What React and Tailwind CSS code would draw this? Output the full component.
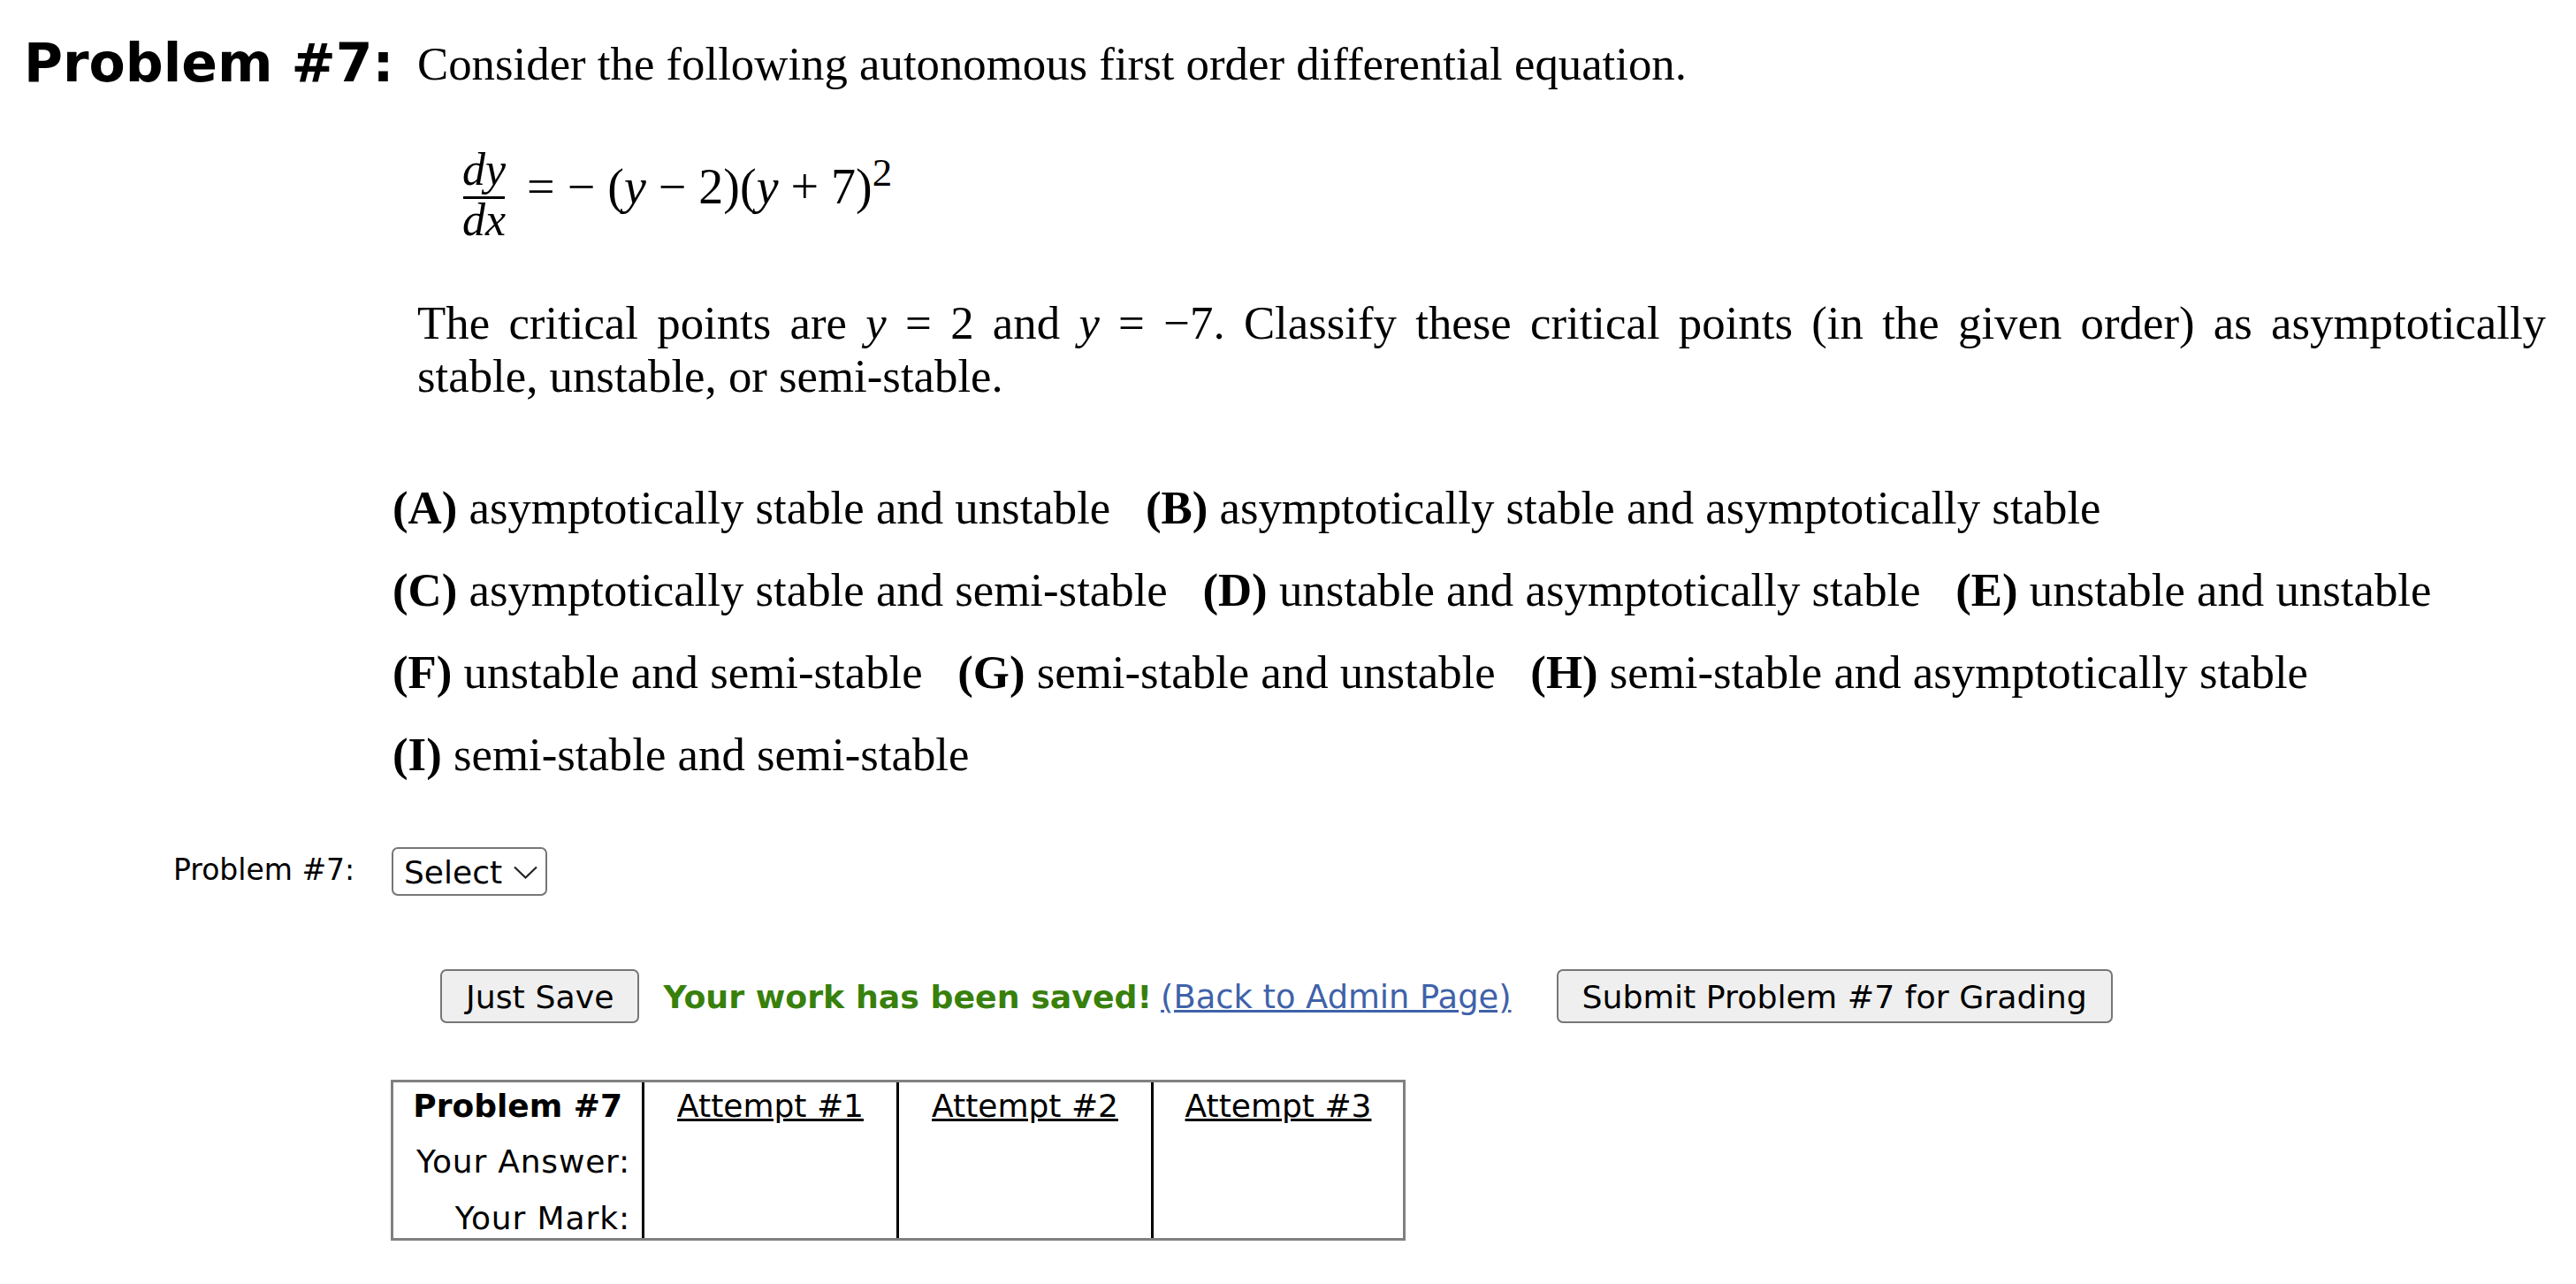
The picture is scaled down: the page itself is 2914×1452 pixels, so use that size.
export default function App() {
  return (
    <div className="min-h-screen bg-white text-black">
      {/* Heading + statement */}
      <div className="flex items-start pt-[36px]">
        <div className="w-[472px] shrink-0 pl-[27px] font-['DejaVu_Sans',sans-serif] font-bold text-[60px] leading-[70px]">
          Problem #7:
        </div>
        <div className="w-[2408px] shrink-0 mt-[6px] font-['Liberation_Serif',serif] text-[52.8px]">
          <div className="leading-[60px]">
            Consider the following autonomous first order differential equation.
          </div>
          <div className="mt-[66px] ml-[51px] flex items-start">
            <div className="flex flex-col items-center text-[52px] italic">
              <span className="leading-[48px]">dy</span>
              <div className="mt-[6px] h-[3px] w-[47px] bg-black" />
              <span className="leading-[48px]">dx</span>
            </div>
            <div className="ml-[24px] mt-[15px] text-[56px] leading-[56px] whitespace-nowrap">
              {"=\u00a0\u2212\u00a0("}
              <span className="italic">y</span>
              {"\u00a0\u2212\u00a02)("}
              <span className="italic">y</span>
              {"\u00a0+\u00a07)"}
              <span className="text-[45px] leading-[0] align-[20px]">2</span>
            </div>
          </div>
          <div className="mt-[62px] leading-[60px]">
            <div className="text-justify [text-align-last:justify]">
              The critical points are <span className="italic">y</span> = 2 and{" "}
              <span className="italic">y</span> = {"\u2212"}7. Classify these critical points (in the given
              order) as asymptotically
            </div>
            <div>stable, unstable, or semi-stable.</div>
          </div>
        </div>
      </div>

      {/* Options */}
      <div className="ml-[444px] mt-[73px] flex flex-col font-['Liberation_Serif',serif] text-[52.8px] leading-[93px] whitespace-nowrap">
        <div>
          <span className="font-bold">(A)</span> asymptotically stable and unstable{"\u00a0\u00a0\u00a0"}
          <span className="font-bold">(B)</span> asymptotically stable and asymptotically stable
        </div>
        <div>
          <span className="font-bold">(C)</span> asymptotically stable and semi-stable{"\u00a0\u00a0\u00a0"}
          <span className="font-bold">(D)</span> unstable and asymptotically stable{"\u00a0\u00a0\u00a0"}
          <span className="font-bold">(E)</span> unstable and unstable
        </div>
        <div>
          <span className="font-bold">(F)</span> unstable and semi-stable{"\u00a0\u00a0\u00a0"}
          <span className="font-bold">(G)</span> semi-stable and unstable{"\u00a0\u00a0\u00a0"}
          <span className="font-bold">(H)</span> semi-stable and asymptotically stable
        </div>
        <div>
          <span className="font-bold">(I)</span> semi-stable and semi-stable
        </div>
      </div>

      {/* Select row */}
      <div className="mt-[58px] flex items-start font-['DejaVu_Sans',sans-serif]">
        <div className="ml-[196px] w-[247px] shrink-0 mt-[6.6px] text-[33px] leading-[38px]">Problem #7:</div>
        <div className="flex h-[55px] w-[176px] shrink-0 items-start rounded-[7px] border-[2.5px] border-[#767676] bg-white pl-[12px] pt-[6px] text-[36px] leading-[42px]">
          <span>Select</span>
          <svg className="ml-[13px] mt-[12.5px]" width="27" height="15" viewBox="0 0 27 15" fill="none">
            <polyline points="1,1.5 13.5,13.5 26,1.5" stroke="#222" strokeWidth="2.2" />
          </svg>
        </div>
      </div>

      {/* Buttons row */}
      <div className="mt-[83px] flex items-center pl-[498px] font-['DejaVu_Sans',sans-serif] text-[36.3px] leading-[42px] whitespace-nowrap">
        <button type="button" className="h-[61px] rounded-[7px] border-[2.5px] border-[#767676] bg-[#efefef] px-[27px] pt-[3px] text-black">
          Just Save
        </button>
        <span className="ml-[27px] pt-[3px] font-bold text-[#38800c]">Your work has been saved!</span>
        <a className="ml-[10px] pt-[3px] text-[36.8px] text-[#3f62a9] underline">(Back to Admin Page)</a>
        <button type="button" className="ml-[51px] h-[61px] rounded-[7px] border-[2.5px] border-[#767676] bg-[#efefef] px-[27px] pt-[3px] text-black">
          Submit Problem #7 for Grading
        </button>
      </div>

      {/* Attempts table */}
      <div className="ml-[442px] mt-[64px] flex w-fit border-[3px] border-[#808080] font-['DejaVu_Sans',sans-serif] text-[36px] leading-[42px] whitespace-nowrap">
        <div className="flex w-[281px] flex-col items-end gap-[21.5px] pb-[1.4px] pr-[13px] pt-[5.6px]">
          <span className="mr-[9px] font-bold">Problem #7</span>
          <span className="tracking-[0.8px]">Your Answer:</span>
          <span className="tracking-[0.9px]">Your Mark:</span>
        </div>
        <div className="w-[288px] border-l-[3px] border-black pt-[5.6px] text-center">
          <span className="underline">Attempt #1</span>
        </div>
        <div className="w-[288px] border-l-[3px] border-black pt-[5.6px] text-center">
          <span className="underline">Attempt #2</span>
        </div>
        <div className="w-[285px] border-l-[3px] border-black pt-[5.6px] text-center">
          <span className="underline">Attempt #3</span>
        </div>
      </div>
    </div>
  );
}
